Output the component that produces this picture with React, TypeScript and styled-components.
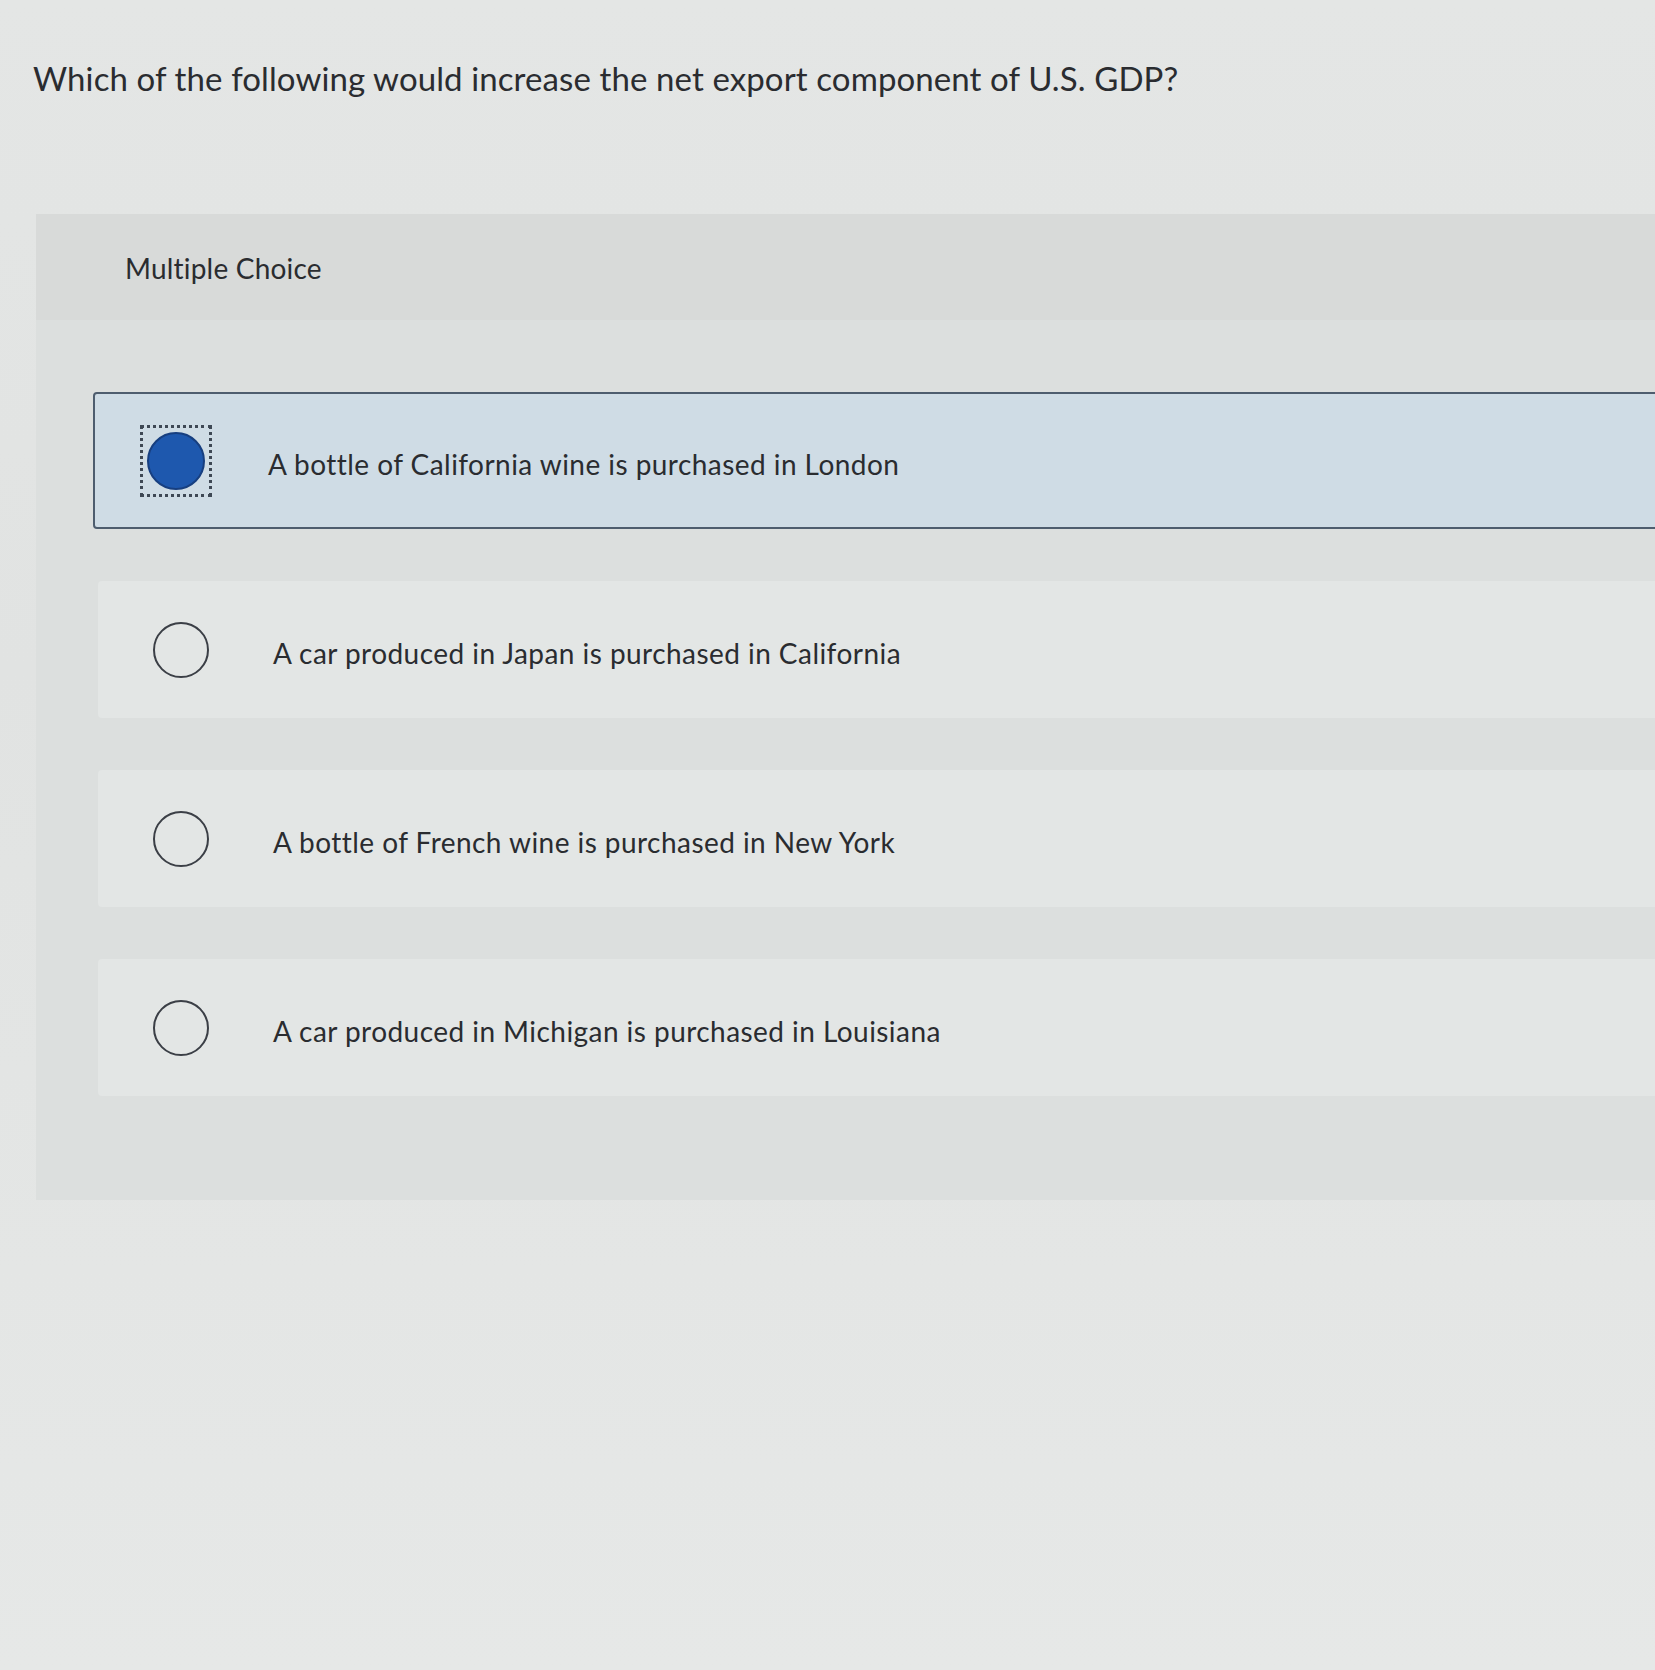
import React from "react";
import styled, { createGlobalStyle } from "styled-components";

const GlobalStyle = createGlobalStyle`
  html, body {
    margin: 0;
    padding: 0;
    background: #e3e5e4;
    overflow: hidden;
  }
  body {
    font-family: Lato, "Noto Sans", "Liberation Sans", sans-serif;
    color: #2c2e32;
  }
`;

const Page = styled.main`
  min-height: 1670px;
  padding: 58px 0 0 33px;
  box-sizing: border-box;
  background: linear-gradient(180deg, #e4e6e5 0%, #e1e3e2 40%, #e6e8e7 100%);
`;

const Question = styled.h1`
  margin: 0 0 116px 0;
  font-size: 33px;
  line-height: 40px;
  font-weight: 400;
  letter-spacing: 0.1px;
  color: #2a2c30;
`;

const Panel = styled.section`
  margin-left: 3px;
  margin-right: -80px;
  background: #dcdfde;
`;

const PanelHeader = styled.div`
  background: #d8dad9;
  padding: 37px 0 35px 89px;
  font-size: 28px;
  line-height: 34px;
  letter-spacing: 0.2px;
  color: #2a2c30;
`;

const PanelBody = styled.div`
  display: flex;
  flex-direction: column;
  gap: 52px;
  padding: 72px 0 104px 57px;
`;

const Option = styled.div<{ $selected?: boolean }>`
  display: flex;
  align-items: center;
  gap: 56px;
  height: 137px;
  box-sizing: border-box;
  margin-left: ${(p) => (p.$selected ? 0 : 5)}px;
  padding-left: ${(p) => (p.$selected ? 45 : 47)}px;
  background: ${(p) => (p.$selected ? "#cfdce5" : "#e3e6e5")};
  border: ${(p) => (p.$selected ? "2px solid #4e5d6e" : "none")};
  border-radius: 4px;
`;

const RadioBox = styled.div<{ $focused?: boolean }>`
  width: 72px;
  height: 72px;
  box-sizing: border-box;
  display: flex;
  align-items: center;
  justify-content: center;
  border: ${(p) => (p.$focused ? "3px dotted #3e4854" : "3px solid transparent")};
  flex-shrink: 0;
`;

const Circle = styled.div<{ $checked?: boolean }>`
  width: ${(p) => (p.$checked ? 58 : 56)}px;
  height: ${(p) => (p.$checked ? 58 : 56)}px;
  box-sizing: border-box;
  border-radius: 50%;
  border: 2px solid ${(p) => (p.$checked ? "#173f80" : "#3b3f46")};
  background: ${(p) => (p.$checked ? "#1e58ae" : "transparent")};
`;

const Label = styled.span`
  padding-top: 6px;
  font-size: 28px;
  line-height: 34px;
  letter-spacing: 0.45px;
  color: #2a2c30;
`;

const options = [
  "A bottle of California wine is purchased in London",
  "A car produced in Japan is purchased in California",
  "A bottle of French wine is purchased in New York",
  "A car produced in Michigan is purchased in Louisiana",
];

export default function App() {
  return (
    <>
      <GlobalStyle />
      <Page>
        <Question>Which of the following would increase the net export component of U.S. GDP?</Question>
        <Panel>
          <PanelHeader>Multiple Choice</PanelHeader>
          <PanelBody>
            {options.map((text, i) => (
              <Option key={text} $selected={i === 0}>
                <RadioBox $focused={i === 0}>
                  <Circle $checked={i === 0} />
                </RadioBox>
                <Label>{text}</Label>
              </Option>
            ))}
          </PanelBody>
        </Panel>
      </Page>
    </>
  );
}
